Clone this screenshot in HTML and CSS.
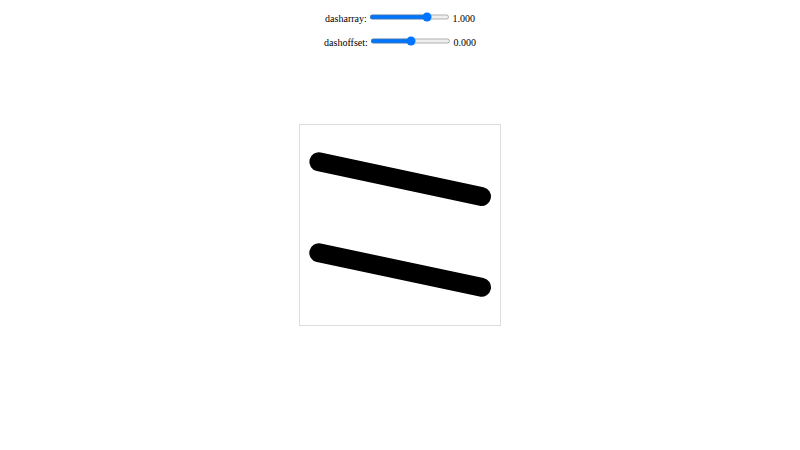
FILE: index.html
```html
<!DOCTYPE html>
<html>
<head>
<meta charset="utf-8">
<link rel="stylesheet" href="styles.css">
</head>
<body>
<div class="controls">
  <div class="row">
    <label class="label">dasharray:</label>
    <input class="slider" type="range" min="0" max="1.333" step="0.001" value="1">
    <span class="value">1.000</span>
  </div>
  <div class="row">
    <label class="label">dashoffset:</label>
    <input class="slider" type="range" min="-1" max="1" step="0.001" value="0">
    <span class="value">0.000</span>
  </div>
</div>
<div class="stage">
  <svg class="canvas" width="200" height="200" viewBox="0 0 200 200">
    <line x1="18.8" y1="36.8" x2="181.5" y2="71.5" class="stroke"/>
    <line x1="18.8" y1="127.8" x2="181.5" y2="162.3" class="stroke"/>
  </svg>
</div>
</body>
</html>
```
FILE: styles.css
```css
html, body {
  margin: 0;
  padding: 0;
  background: #fff;
}
body {
  font-family: "Liberation Serif", "Times New Roman", serif;
  font-size: 10px;
  color: #000;
}
.controls {
  padding-top: 5px;
  display: flex;
  flex-direction: column;
  align-items: center;
}
.row {
  height: 24px;
  display: flex;
  align-items: center;
  justify-content: center;
}
.label {
  line-height: 12px;
  padding-top: 3px;
}
.value {
  line-height: 12px;
  padding-top: 3px;
}
.slider {
  zoom: 0.625;
  margin: 0 4px;
}
.stage {
  margin-top: 71px;
  display: flex;
  justify-content: center;
}
.canvas {
  display: block;
  border: 1px solid #ddd;
}
.stroke {
  stroke: #000;
  stroke-width: 19;
  stroke-linecap: round;
}
```
